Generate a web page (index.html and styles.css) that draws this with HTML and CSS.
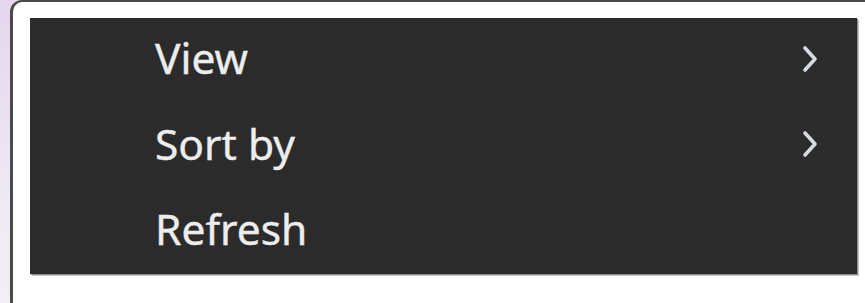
FILE: index.html
```html
<!DOCTYPE html>
<html lang="en">
<head>
    <meta charset="UTF-8">
    <title>Context menu</title>
    <link rel="stylesheet" href="styles.css">
</head>
<body>
    <div class="window">
        <ul class="menu">
            <li class="item">
                <span class="label">View</span>
                <svg class="chevron" width="18" height="28" viewBox="0 0 18 28"><polyline points="4,3 14,14 4,25"/></svg>
            </li>
            <li class="item">
                <span class="label">Sort by</span>
                <svg class="chevron" width="18" height="28" viewBox="0 0 18 28"><polyline points="4,3 14,14 4,25"/></svg>
            </li>
            <li class="item">
                <span class="label">Refresh</span>
            </li>
        </ul>
    </div>
</body>
</html>
```

FILE: styles.css
```css
*{
    margin: 0;
    padding: 0;
    box-sizing: border-box;
}

body{
    width: 865px;
    height: 303px;
    overflow: hidden;
    background: linear-gradient(180deg, #e4d6ee 0%, #efe8f3 60%, #f3eef5 100%);
    font-family: "Noto Sans", "Open Sans", sans-serif;
}

.window{
    margin-left: 10px;
    width: 855px;
    height: 303px;
    background-color: #ffffff;
    border-top: 2px solid #4a4a4a;
    border-left: 3px solid #4a4a4a;
    border-radius: 12px 0 0 0;
    padding: 16px 0 0 17px;
}

.menu{
    list-style: none;
    width: 827px;
    height: 256px;
    background-color: #2b2b2b;
    box-shadow: 1px 1px 0 #8a8a8a, 2px 2px 0 #c8c8c8;
    display: flex;
    flex-direction: column;
}

.item{
    height: 85.33px;
    display: flex;
    align-items: center;
    justify-content: space-between;
    padding: 0 38px 4px 125px;
}

.label{
    color: #ededed;
    font-size: 42.5px;
    line-height: 1;
    -webkit-text-stroke: 0.4px #ededed;
}

.chevron{
    fill: none;
    stroke: #d6dbe2;
    stroke-width: 3.6;
    stroke-linecap: round;
    stroke-linejoin: round;
}
```
